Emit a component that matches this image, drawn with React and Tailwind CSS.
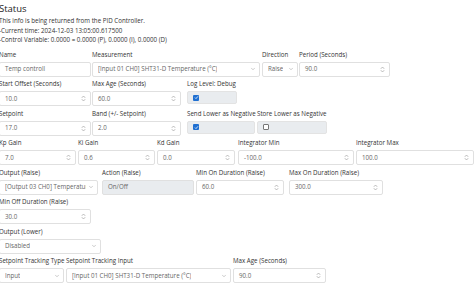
import { ChevronDown } from "lucide-react";

const font = { fontFamily: "'Open Sans', 'Noto Sans', sans-serif" };

function Spin() {
  return (
    <svg width="5" height="7" viewBox="0 0 5 7" className="shrink-0 text-[#a0a0a0]">
      <path d="M0.8 2.8 L2.5 1 L4.2 2.8" fill="none" stroke="currentColor" strokeWidth="0.7" />
      <path d="M0.8 4.2 L2.5 6 L4.2 4.2" fill="none" stroke="currentColor" strokeWidth="0.7" />
    </svg>
  );
}

function Field({ label, w, children, className = "" }) {
  return (
    <div className={`flex flex-col shrink-0 ${className}`} style={{ width: w }}>
      <div className="leading-[9px] h-[9px] mb-[3px] whitespace-nowrap text-[#333]">{label}</div>
      {children}
    </div>
  );
}

function NumInput({ value }) {
  return (
    <div className="h-[15px] border border-[#e0e0e0] rounded-[2px] bg-white flex items-center justify-between pl-[5px] pr-[4px] text-[#666]">
      <span>{value}</span>
      <Spin />
    </div>
  );
}

function TextInput({ value }) {
  return (
    <div className="h-[15px] border border-[#e0e0e0] rounded-[2px] bg-white flex items-center pl-[5px] text-[#666]">
      <span>{value}</span>
    </div>
  );
}

function Select({ value }) {
  return (
    <div className="h-[15px] border border-[#e0e0e0] rounded-[2px] bg-white flex items-center justify-between pl-[5px] pr-[3px] text-[#666] overflow-hidden">
      <span className="whitespace-nowrap overflow-hidden">{value}</span>
      <ChevronDown size={6} strokeWidth={2} className="shrink-0 ml-[2px] text-[#999]" />
    </div>
  );
}

function Check({ checked }) {
  return (
    <div className="h-[13px] rounded-[2px] bg-[#e9ecef] border border-[#e3e3e3] flex items-center pl-[5px]">
      {checked ? (
        <div className="w-[6px] h-[6px] rounded-[1px] bg-[#1f6fd1] flex items-center justify-center">
          <svg width="5" height="5" viewBox="0 0 5 5">
            <path d="M1 2.6 L2 3.6 L4 1.3" fill="none" stroke="white" strokeWidth="0.8" />
          </svg>
        </div>
      ) : (
        <div className="w-[6px] h-[6px] rounded-[1px] bg-white border border-[#777]" />
      )}
    </div>
  );
}

function Row({ children }) {
  return <div className="flex mb-[2.5px]">{children}</div>;
}

export default function App() {
  return (
    <div className="w-[474px] h-[284px] bg-white overflow-hidden text-[6.2px] text-[#333]" style={font}>
      <div className="ml-[-1px]">
        <div className="pt-[3px] text-[9.5px] leading-[12px] text-[#222]">Status</div>
        <div className="leading-[9.5px] mt-[1px]">This info is being returned from the PID Controller.</div>
        <div className="leading-[9.5px]">-Current time: 2024-12-03 13:05:00.617500</div>
        <div className="leading-[9.5px]">-Control Variable: 0.0000 = 0.0000 (P), 0.0000 (I), 0.0000 (D)</div>
        <div className="h-[5px]" />

        <Row>
          <Field label="Name" w={92}><TextInput value="Temp controll" /></Field>
          <Field label="Measurement" w={168} className="ml-[1px]"><Select value="[Input 01 CH0] SHT31-D Temperature (°C)" /></Field>
          <Field label="Direction" w={36} className="ml-[2px]"><Select value="Raise" /></Field>
          <Field label="Period (Seconds)" w={91} className="ml-[1px]"><NumInput value="90.0" /></Field>
        </Row>
        <Row>
          <Field label="Start Offset (Seconds)" w={92}><NumInput value="10.0" /></Field>
          <Field label="Max Age (Seconds)" w={89} className="ml-[1px]"><NumInput value="60.0" /></Field>
          <Field label="Log Level: Debug" w={50} className="ml-[6px]"><Check checked /></Field>
        </Row>
        <Row>
          <Field label="Setpoint" w={92}><NumInput value="17.0" /></Field>
          <Field label="Band (+/- Setpoint)" w={89} className="ml-[1px]"><NumInput value="2.0" /></Field>
          <Field label="Send Lower as Negative" w={68} className="ml-[6px]"><Check checked /></Field>
          <Field label="Store Lower as Negative" w={70} className="ml-[2px]"><Check /></Field>
        </Row>
        <Row>
          <Field label="Kp Gain" w={77}><NumInput value="7.0" /></Field>
          <Field label="Ki Gain" w={77} className="ml-[2px]"><NumInput value="0.6" /></Field>
          <Field label="Kd Gain" w={78} className="ml-[2px]"><NumInput value="0.0" /></Field>
          <Field label="Integrator Min" w={116} className="ml-[3px]"><NumInput value="-100.0" /></Field>
          <Field label="Integrator Max" w={118} className="ml-[2px]"><NumInput value="100.0" /></Field>
        </Row>
        <Row>
          <Field label="Output (Raise)" w={99}><Select value="[Output 03 CH0] Temperatur" /></Field>
          <Field label="Action (Raise)" w={92} className="ml-[4px]">
            <div className="h-[15px] border border-[#e0e0e0] rounded-[2px] bg-[#e9ecef] flex items-center pl-[5px] text-[#666]">On/Off</div>
          </Field>
          <Field label="Min On Duration (Raise)" w={88} className="ml-[2px]"><NumInput value="60.0" /></Field>
          <Field label="Max On Duration (Raise)" w={94} className="ml-[5px]"><NumInput value="300.0" /></Field>
        </Row>
        <Row>
          <Field label="Min Off Duration (Raise)" w={92}><NumInput value="30.0" /></Field>
        </Row>
        <Row>
          <Field label="Output (Lower)" w={102}><Select value="Disabled" /></Field>
        </Row>
        <Row>
          <Field label="Setpoint Tracking Type" w={65}><Select value="Input" /></Field>
          <Field label="Setpoint Tracking Input" w={165} className="ml-[2px]"><Select value="[Input 01 CH0] SHT31-D Temperature (°C)" /></Field>
          <Field label="Max Age (Seconds)" w={93} className="ml-[2px]"><NumInput value="90.0" /></Field>
        </Row>
      </div>
    </div>
  );
}
